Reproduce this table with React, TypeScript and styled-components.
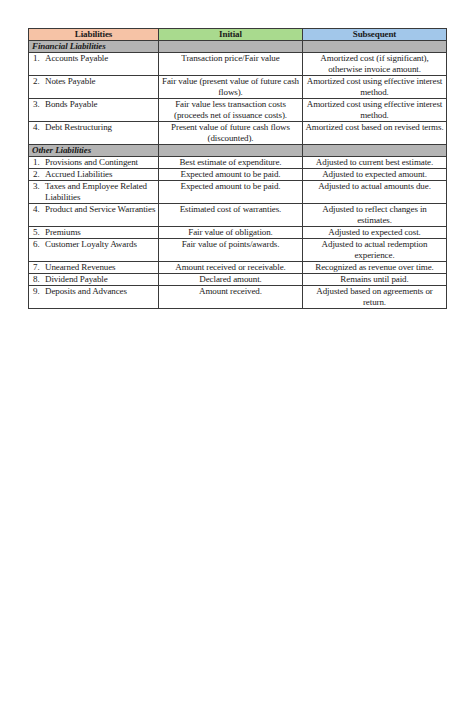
import styled, { createGlobalStyle } from 'styled-components'

const GlobalStyle = createGlobalStyle`
  html, body {
    margin: 0;
    padding: 0;
    background: #ffffff;
  }
  body {
    font-family: "Liberation Serif", "Times New Roman", serif;
    color: #1a1a1a;
  }
`

const Page = styled.div`
  width: 474px;
  height: 724px;
  padding: 28px 0 0 28px;
  box-sizing: border-box;
`

const Table = styled.table`
  border-collapse: collapse;
  width: 418px;
  table-layout: fixed;
  font-size: 9px;
  line-height: 11px;
  letter-spacing: -0.1px;
`

const HeadCell = styled.th<{ $bg: string }>`
  background: ${p => p.$bg};
  border: 1px solid #3a3a3a;
  font-weight: bold;
  text-align: center;
  padding: 0 2px;
  height: 10px;
`

const GroupCell = styled.td`
  background: #b4b4b4;
  border: 1px solid #3a3a3a;
  font-weight: bold;
  font-style: italic;
  padding: 0 3px;
`

const Cell = styled.td`
  border: 1px solid #3a3a3a;
  vertical-align: top;
  text-align: center;
  padding: 0 1px;
`

const NameCell = styled.td`
  border: 1px solid #3a3a3a;
  vertical-align: top;
  padding: 0 0 0 4px;
`

const Item = styled.div`
  display: flex;
`

const Num = styled.span`
  flex: 0 0 12px;
`

type Row = { name: string; initial: string; subsequent: string }

const financial: Row[] = [
  { name: 'Accounts Payable', initial: 'Transaction price/Fair value', subsequent: 'Amortized cost (if significant), otherwise invoice amount.' },
  { name: 'Notes Payable', initial: 'Fair value (present value of future cash flows).', subsequent: 'Amortized cost using effective interest method.' },
  { name: 'Bonds Payable', initial: 'Fair value less transaction costs (proceeds net of issuance costs).', subsequent: 'Amortized cost using effective interest method.' },
  { name: 'Debt Restructuring', initial: 'Present value of future cash flows (discounted).', subsequent: 'Amortized cost based on revised terms.' },
]

const other: Row[] = [
  { name: 'Provisions and Contingent', initial: 'Best estimate of expenditure.', subsequent: 'Adjusted to current best estimate.' },
  { name: 'Accrued Liabilities', initial: 'Expected amount to be paid.', subsequent: 'Adjusted to expected amount.' },
  { name: 'Taxes and Employee Related Liabilities', initial: 'Expected amount to be paid.', subsequent: 'Adjusted to actual amounts due.' },
  { name: 'Product and Service Warranties', initial: 'Estimated cost of warranties.', subsequent: 'Adjusted to reflect changes in estimates.' },
  { name: 'Premiums', initial: 'Fair value of obligation.', subsequent: 'Adjusted to expected cost.' },
  { name: 'Customer Loyalty Awards', initial: 'Fair value of points/awards.', subsequent: 'Adjusted to actual redemption experience.' },
  { name: 'Unearned Revenues', initial: 'Amount received or receivable.', subsequent: 'Recognized as revenue over time.' },
  { name: 'Dividend Payable', initial: 'Declared amount.', subsequent: 'Remains until paid.' },
  { name: 'Deposits and Advances', initial: 'Amount received.', subsequent: 'Adjusted based on agreements or return.' },
]

const renderRows = (rows: Row[]) =>
  rows.map((r, i) => (
    <tr key={r.name}>
      <NameCell>
        <Item>
          <Num>{i + 1}.</Num>
          <span>{r.name}</span>
        </Item>
      </NameCell>
      <Cell>{r.initial}</Cell>
      <Cell>{r.subsequent}</Cell>
    </tr>
  ))

const App = () => (
  <Page>
    <GlobalStyle />
    <Table>
      <colgroup>
        <col style={{ width: 130 }} />
        <col style={{ width: 144 }} />
        <col style={{ width: 144 }} />
      </colgroup>
      <thead>
        <tr>
          <HeadCell $bg="#f6c3a6">Liabilities</HeadCell>
          <HeadCell $bg="#a9da8e">Initial</HeadCell>
          <HeadCell $bg="#a2c7ea">Subsequent</HeadCell>
        </tr>
      </thead>
      <tbody>
        <tr>
          <GroupCell>Financial Liabilities</GroupCell>
          <GroupCell />
          <GroupCell />
        </tr>
        {renderRows(financial)}
        <tr>
          <GroupCell>Other Liabilities</GroupCell>
          <GroupCell />
          <GroupCell />
        </tr>
        {renderRows(other)}
      </tbody>
    </Table>
  </Page>
)

export default App
